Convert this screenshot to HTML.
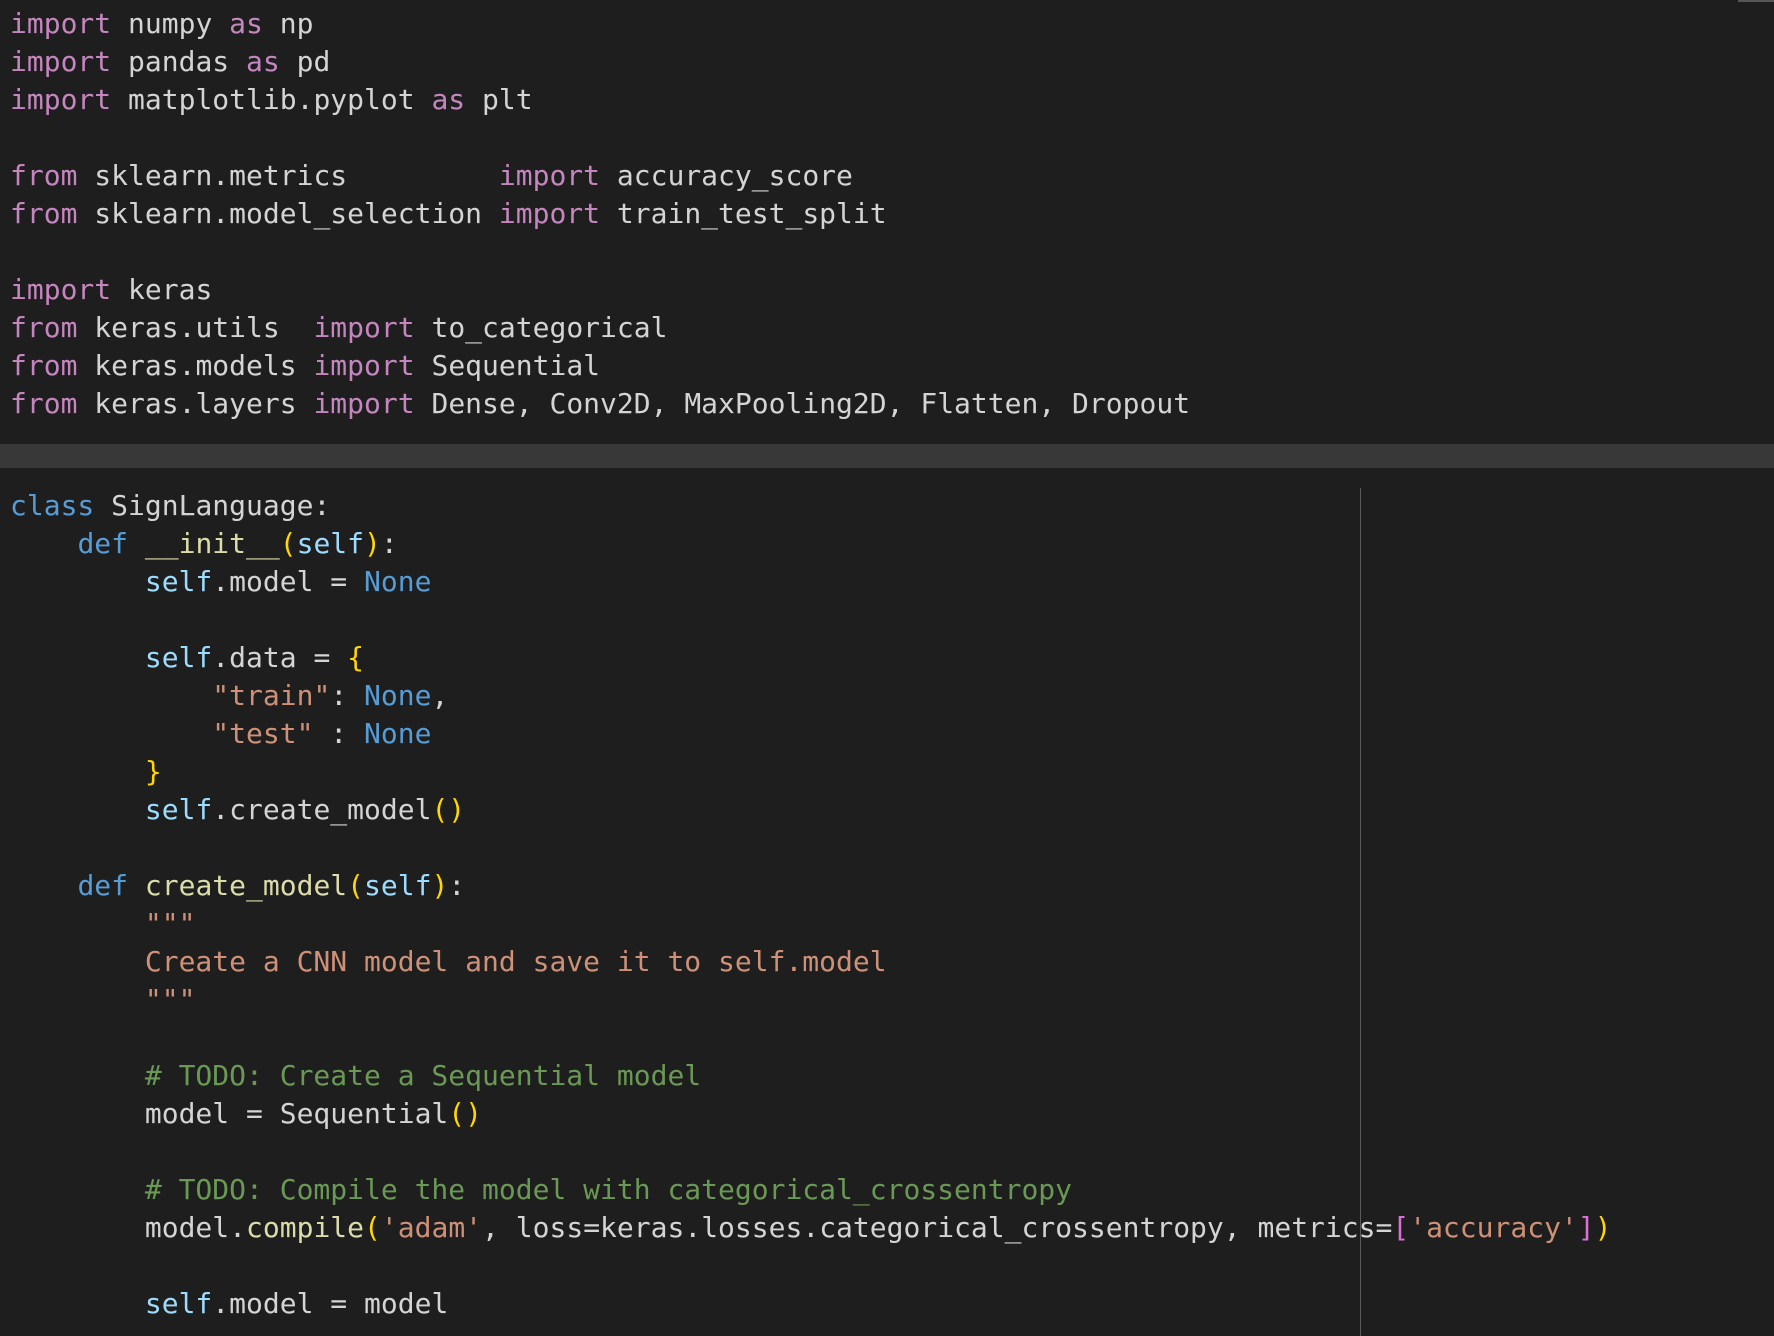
<!DOCTYPE html>
<html><head><meta charset="utf-8"><style>
html,body{margin:0;padding:0;background:#1e1e1e;width:1774px;height:1336px;overflow:hidden;position:relative}
pre{margin:0;position:absolute;left:10px;font-family:"DejaVu Sans Mono","Liberation Mono",monospace;font-size:28px;line-height:38px;color:#d4d4d4;white-space:pre}
.k{color:#c586c0}.b{color:#569cd6}.v{color:#9cdcfe}.f{color:#dcdcaa}.s{color:#ce9178}.c{color:#6a9955}.y{color:#ffd700}.m{color:#da70d6}
#sep{position:absolute;left:0;top:444px;width:1774px;height:24px;background:#383838}
#vl{position:absolute;left:1360px;top:488px;width:1px;height:848px;background:#5a5a5a}
#tr{position:absolute;left:1738px;top:0;width:36px;height:2px;background:#555}
</style></head><body>
<div id="tr"></div>
<pre style="top:5px"><span class="k">import</span> numpy <span class="k">as</span> np
<span class="k">import</span> pandas <span class="k">as</span> pd
<span class="k">import</span> matplotlib.pyplot <span class="k">as</span> plt

<span class="k">from</span> sklearn.metrics         <span class="k">import</span> accuracy_score
<span class="k">from</span> sklearn.model_selection <span class="k">import</span> train_test_split

<span class="k">import</span> keras
<span class="k">from</span> keras.utils  <span class="k">import</span> to_categorical
<span class="k">from</span> keras.models <span class="k">import</span> Sequential
<span class="k">from</span> keras.layers <span class="k">import</span> Dense, Conv2D, MaxPooling2D, Flatten, Dropout</pre>
<div id="sep"></div>
<div id="vl"></div>
<pre style="top:487px"><span class="b">class</span> SignLanguage:
    <span class="b">def</span> <span class="f">__init__</span><span class="y">(</span><span class="v">self</span><span class="y">)</span>:
        <span class="v">self</span>.model = <span class="b">None</span>

        <span class="v">self</span>.data = <span class="y">{</span>
            <span class="s">"train"</span>: <span class="b">None</span>,
            <span class="s">"test"</span> : <span class="b">None</span>
        <span class="y">}</span>
        <span class="v">self</span>.create_model<span class="y">()</span>

    <span class="b">def</span> <span class="f">create_model</span><span class="y">(</span><span class="v">self</span><span class="y">)</span>:
        <span class="s">"""</span>
<span class="s">        Create a CNN model and save it to self.model</span>
<span class="s">        """</span>

        <span class="c"># TODO: Create a Sequential model</span>
        model = Sequential<span class="y">()</span>

        <span class="c"># TODO: Compile the model with categorical_crossentropy</span>
        model.<span class="f">compile</span><span class="y">(</span><span class="s">'adam'</span>, loss=keras.losses.categorical_crossentropy, metrics=<span class="m">[</span><span class="s">'accuracy'</span><span class="m">]</span><span class="y">)</span>

        <span class="v">self</span>.model = model</pre>
</body></html>
